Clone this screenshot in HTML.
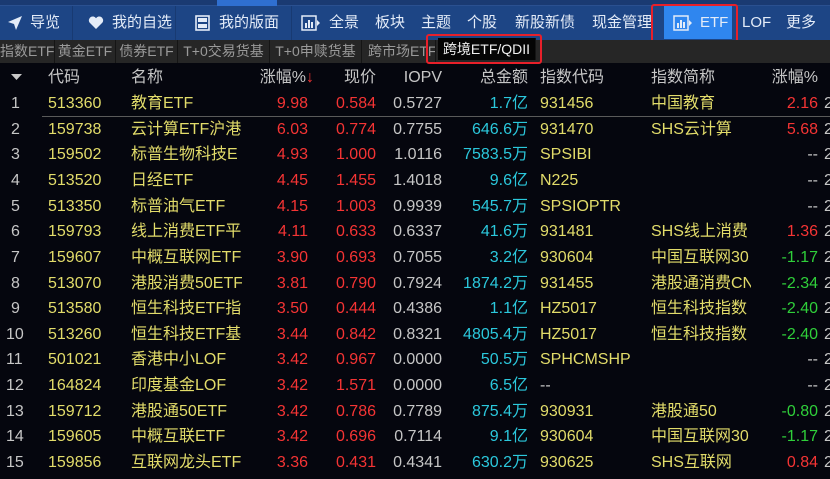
<!DOCTYPE html>
<html><head><meta charset="utf-8"><style>
*{margin:0;padding:0;box-sizing:border-box}
body{width:830px;height:479px;overflow:hidden;background:#05060e;font-family:"Liberation Sans","Noto Sans CJK SC",sans-serif;position:relative;color:#c8c8c8}
.top{position:absolute;left:0;top:0;width:830px;height:6px;background:#1a3a72;border-bottom:1px solid #2a5090}
.top i{position:absolute;left:217px;top:0;width:60px;height:6px;background:#2f6fd0}
.nav{position:absolute;left:0;top:6px;width:830px;height:34px;background:#1d4585}
.nav span{position:absolute;top:0;line-height:34px;font-size:15px;color:#e4ecf8}
.sep{position:absolute;top:6px;width:1px;height:34px;background:#183a72}
.tabs{position:absolute;left:0;top:40px;width:830px;height:23px;background:#262626}
.tabs span{position:absolute;top:0;line-height:23px;font-size:14px;color:#9a9a9a;border-right:1px solid #151515;height:23px;text-align:center;overflow:hidden;white-space:nowrap}
.c{position:absolute;font-size:16px;white-space:nowrap;overflow:hidden;line-height:25px}
.r{text-align:right}
.y{color:#e2dc6a}.rd{color:#f53434}.g{color:#2fcf3a}.cy{color:#2bc8dc}.w{color:#c6c6c6}.h{color:#c6c6c6}
</style></head><body>
<div class="top"><i></i></div>
<div class="nav">
<svg style="position:absolute;left:7px;top:9px" width="16" height="16" viewBox="0 0 16 16"><path d="M15 1 L1 7 L7 9 L9 15 Z" fill="#e4ecf8"/></svg>
<span style="left:30px">导览</span>
<svg style="position:absolute;left:88px;top:10px" width="16" height="14" viewBox="0 0 16 14"><path d="M8 13 L1.5 6.5 A3.7 3.7 0 0 1 8 2.2 A3.7 3.7 0 0 1 14.5 6.5 Z" fill="#e4ecf8"/></svg>
<span style="left:112px">我的自选</span>
<svg style="position:absolute;left:195px;top:9px" width="15" height="16" viewBox="0 0 15 16"><rect x="1" y="1" width="13" height="14" fill="none" stroke="#e4ecf8" stroke-width="1.6"/><rect x="3" y="3" width="9" height="4" fill="#e4ecf8"/><rect x="3" y="9" width="9" height="4" fill="#e4ecf8"/></svg>
<span style="left:219px">我的版面</span>
<svg style="position:absolute;left:301px;top:9px" width="20" height="16" viewBox="0 0 20 16"><rect x="1" y="1" width="14" height="14" fill="none" stroke="#e4ecf8" stroke-width="1.5"/><rect x="4" y="8" width="2" height="5" fill="#e4ecf8"/><rect x="7" y="5" width="2" height="8" fill="#e4ecf8"/><rect x="10" y="7" width="2" height="6" fill="#e4ecf8"/><path d="M16 5 L19 8 L16 11Z" fill="#e4ecf8"/></svg>
<span style="left:329px">全景</span>
<span style="left:375px">板块</span>
<span style="left:421px">主题</span>
<span style="left:467px">个股</span>
<span style="left:515px">新股新债</span>
<span style="left:592px">现金管理</span>
<div style="position:absolute;left:664px;top:0;width:68px;height:33px;background:#2f86ef"></div>
<svg style="position:absolute;left:673px;top:9px" width="20" height="16" viewBox="0 0 20 16"><rect x="1" y="1" width="14" height="14" fill="none" stroke="#e4ecf8" stroke-width="1.5"/><rect x="4" y="8" width="2" height="5" fill="#e4ecf8"/><rect x="7" y="5" width="2" height="8" fill="#e4ecf8"/><rect x="10" y="7" width="2" height="6" fill="#e4ecf8"/><path d="M16 5 L19 8 L16 11Z" fill="#e4ecf8"/></svg>
<span style="left:700px">ETF</span>
<span style="left:742px">LOF</span>
<span style="left:786px">更多</span>
</div>
<div class="sep" style="left:72px"></div><div class="sep" style="left:175px"></div><div class="sep" style="left:291px"></div>
<div style="position:absolute;left:651px;top:4px;width:87px;height:41px;border:2.5px solid #e8202a;border-radius:3px"></div>
<div class="tabs">
<span style="left:0;width:55px;text-align:left">指数ETF</span>
<span style="left:55px;width:61px">黄金ETF</span>
<span style="left:116px;width:62px">债券ETF</span>
<span style="left:178px;width:92px">T+0交易货基</span>
<span style="left:270px;width:92px">T+0申赎货基</span>
<span style="left:362px;width:74px;text-align:left;padding-left:6px">跨市场ETF</span>
<span style="left:438px;width:98px;background:#050505;color:#f0f0f0;top:-2px;height:22px">跨境ETF/QDII</span>
</div>
<div style="position:absolute;left:426px;top:34px;width:116px;height:30px;border:2.5px solid #e8202a;border-radius:3px"></div>
<div id="t"></div>
<div style="position:absolute;left:42px;top:116px;width:788px;height:1px;background:#5a5a5a"></div>
<script>
var hd='<svg style="position:absolute;left:11px;top:74px" width="12" height="8"><path d="M0 0H11L5.5 6Z" fill="#c8c8c8"/></svg>'+
'<div class="c h" style="left:48px;top:65px">代码</div><div class="c h" style="left:131px;top:65px">名称</div>'+
'<div class="c h r" style="left:230px;width:84px;top:65px">涨幅%<span style="color:#f53434">↓</span></div>'+
'<div class="c h r" style="left:320px;width:56px;top:65px">现价</div><div class="c h r" style="left:390px;width:52px;top:65px">IOPV</div>'+
'<div class="c h r" style="left:450px;width:78px;top:65px">总金额</div><div class="c h" style="left:540px;top:65px">指数代码</div>'+
'<div class="c h" style="left:651px;top:65px">指数简称</div><div class="c h r" style="left:740px;width:78px;top:65px">涨幅%</div>';
var d=[["513360","教育ETF","9.98","0.584","0.5727","1.7亿","931456","中国教育","2.16"],
["159738","云计算ETF沪港","6.03","0.774","0.7755","646.6万","931470","SHS云计算","5.68"],
["159502","标普生物科技E","4.93","1.000","1.0116","7583.5万","SPSIBI","","--"],
["513520","日经ETF","4.45","1.455","1.4018","9.6亿","N225","","--"],
["513350","标普油气ETF","4.15","1.003","0.9939","545.7万","SPSIOPTR","","--"],
["159793","线上消费ETF平","4.11","0.633","0.6337","41.6万","931481","SHS线上消费","1.36"],
["159607","中概互联网ETF","3.90","0.693","0.7055","3.2亿","930604","中国互联网30","-1.17"],
["513070","港股消费50ETF","3.81","0.790","0.7924","1874.2万","931455","港股通消费CN","-2.34"],
["513580","恒生科技ETF指","3.50","0.444","0.4386","1.1亿","HZ5017","恒生科技指数","-2.40"],
["513260","恒生科技ETF基","3.44","0.842","0.8321","4805.4万","HZ5017","恒生科技指数","-2.40"],
["501021","香港中小LOF","3.42","0.967","0.0000","50.5万","SPHCMSHP","","--"],
["164824","印度基金LOF","3.42","1.571","0.0000","6.5亿","--","","--"],
["159712","港股通50ETF","3.42","0.786","0.7789","875.4万","930931","港股通50","-0.80"],
["159605","中概互联ETF","3.42","0.696","0.7114","9.1亿","930604","中国互联网30","-1.17"],
["159856","互联网龙头ETF","3.36","0.431","0.4341","630.2万","930625","SHS互联网","0.84"]];
var h=hd;
d.forEach(function(r,i){var t=(91+i*25.64).toFixed(1);
var lc=r[8]=="--"?"w":(r[8][0]=="-"?"g":"rd");
h+='<div class="c w" style="left:'+(i<9?11:6)+'px;top:'+t+'px">'+(i+1)+'</div>'+
'<div class="c y" style="left:48px;top:'+t+'px">'+r[0]+'</div>'+
'<div class="c y" style="left:131px;width:111px;top:'+t+'px">'+r[1]+'</div>'+
'<div class="c rd r" style="left:240px;width:68px;top:'+t+'px">'+r[2]+'</div>'+
'<div class="c rd r" style="left:310px;width:66px;top:'+t+'px">'+r[3]+'</div>'+
'<div class="c w r" style="left:380px;width:62px;top:'+t+'px">'+r[4]+'</div>'+
'<div class="c cy r" style="left:446px;width:82px;top:'+t+'px">'+r[5]+'</div>'+
'<div class="c '+(r[6]=="--"?"w":"y")+'" style="left:540px;top:'+t+'px">'+r[6]+'</div>'+
'<div class="c y" style="left:651px;width:100px;top:'+t+'px">'+r[7]+'</div>'+
'<div class="c '+lc+' r" style="left:740px;width:78px;top:'+t+'px">'+r[8]+'</div>'+
'<div class="c w" style="left:824px;top:'+t+'px">2</div>';});
document.getElementById('t').innerHTML=h;
</script>
</body></html>
